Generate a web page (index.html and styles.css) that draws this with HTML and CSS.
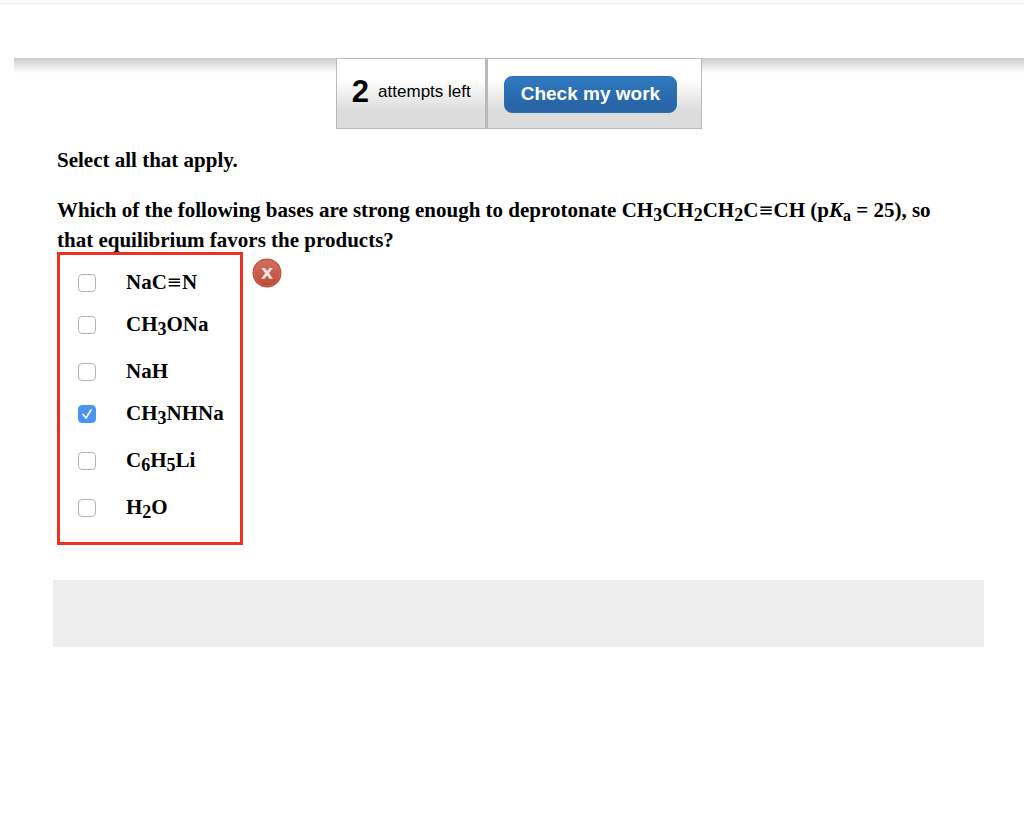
FILE: index.html
```html
<!DOCTYPE html>
<html lang="en">
<head>
    <meta charset="UTF-8">
    <title>Question</title>
    <link rel="stylesheet" href="styles.css">
</head>
<body>
    <div class="top-strip"></div>

    <header class="toolbar">
        <div class="toolbar-box">
            <div class="attempts"><strong>2</strong> <span>attempts left</span></div>
            <div class="check"><button type="button" id="checkBtn">Check my work</button></div>
        </div>
    </header>

    <main>
        <p class="prompt">Select all that apply.</p>
        <p class="prompt question">Which of the following bases are strong enough to deprotonate CH<sub>3</sub>CH<sub>2</sub>CH<sub>2</sub>C<span class="bond">≡</span>CH (p<i>K</i><sub class="small">a</sub> = 25), so that equilibrium favors the products?</p>

        <div class="answer">
            <ul class="choices">
                <li><input type="checkbox" id="nacn"><label for="nacn">NaC<span class="bond">≡</span>N</label></li>
                <li class="tall"><input type="checkbox" id="ch3ona"><label for="ch3ona">CH<sub>3</sub>ONa</label></li>
                <li><input type="checkbox" id="nah"><label for="nah">NaH</label></li>
                <li class="tall"><input type="checkbox" id="ch3nhna" checked><label for="ch3nhna">CH<sub>3</sub>NHNa</label></li>
                <li class="tall"><input type="checkbox" id="c6h5li"><label for="c6h5li">C<sub>6</sub>H<sub>5</sub>Li</label></li>
                <li class="tall"><input type="checkbox" id="h2o"><label for="h2o">H<sub>2</sub>O</label></li>
            </ul>
            <svg class="wrong" viewBox="0 0 30 30" role="img" aria-label="Incorrect">
                <defs>
                    <linearGradient id="red" x1="0" y1="0" x2="0" y2="1">
                        <stop offset="0" stop-color="#d2705f"/>
                        <stop offset="1" stop-color="#bd4937"/>
                    </linearGradient>
                </defs>
                <circle cx="15" cy="15" r="14.5" fill="#b9503f"/>
                <circle cx="15" cy="15" r="13" fill="url(#red)" stroke="#d07565" stroke-width="0.6"/>
                <path d="M9.4 10h3.6l2.2 3.1 2.2-3.1h3.4l-3.8 5.2 4 5.6h-3.6l-2.4-3.4-2.4 3.4H9.1l4.1-5.6z" fill="#f7e6e2"/>
            </svg>
        </div>

        <div class="footer-bar"></div>
    </main>
</body>
</html>
```

FILE: styles.css
```css
body {
    margin: 0;
    background-color: white;
    color: black;
    font-family: "Liberation Serif", "Times New Roman", serif;
}
.top-strip {
    height: 3px;
    background-color: #fafafa;
    border-bottom: 1px solid #ececec;
}
.toolbar {
    display: flex;
    justify-content: center;
    align-items: flex-start;
    margin: 54px 0 0 14px;
    background: linear-gradient(#cbcbcb, white) no-repeat 0 0 / 100% 15px;
}
.toolbar-box {
    display: flex;
    box-sizing: border-box;
    height: 71px;
    border: 1px solid #b9b9b9;
    background: linear-gradient(white 30%, #dcdcdc 75%);
    font-family: "Liberation Sans", Arial, sans-serif;
}
.attempts {
    display: flex;
    align-items: center;
    gap: 9px;
    padding: 0 14px 3px 15px;
    font-size: 17px;
}
.attempts strong {
    font-size: 31px;
}
.check {
    padding: 17px 24px 0 16px;
    border-left: 3px solid #b9b9b9;
}
button {
    display: block;
    height: 37px;
    padding: 0 16px 2px;
    border: 1px solid #2a6db0;
    border-radius: 8px;
    background: linear-gradient(#2f7ac2, #2866a8 75%);
    color: white;
    font-family: "Liberation Sans", Arial, sans-serif;
    font-size: 19px;
    font-weight: bold;
    cursor: pointer;
}
main {
    padding: 16px 40px 24px 53px;
}
.prompt {
    margin: 0 24px 20px 4px;
    font-size: 21px;
    font-weight: bold;
    line-height: 30px;
}
.prompt.question {
    margin-bottom: 0;
}
sub {
    font-size: 18px;
    line-height: 0;
    vertical-align: -4px;
}
sub.small {
    font-size: 16px;
}
.bond {
    font-family: "DejaVu Sans", sans-serif;
    font-size: 18px;
    font-weight: normal;
    line-height: 0;
    vertical-align: 1px;
}
.answer {
    display: flex;
    align-items: flex-start;
    gap: 9px;
    margin: -3px 0 35px 4px;
}
.choices {
    margin: 0;
    padding: 15px 16px 0 18px;
    border: 3px solid #ee3024;
    list-style: none;
    font-size: 21px;
    font-weight: bold;
    line-height: 24px;
}
.choices li {
    display: flex;
    align-items: flex-start;
    height: 42px;
}
.choices li.tall {
    height: 47px;
}
input[type="checkbox"] {
    appearance: none;
    box-sizing: border-box;
    width: 18px;
    height: 18px;
    margin: 4px 30px 0 0;
    border: 1px solid #b4b4b4;
    border-radius: 4px;
    background-color: white;
}
input[type="checkbox"]:checked {
    border-color: #4a94f4;
    background: #4a94f4 url("data:image/svg+xml,%3Csvg xmlns='http://www.w3.org/2000/svg' viewBox='0 0 16 16'%3E%3Cpath d='M4 8.5l3 3.5 5-8' fill='none' stroke='white' stroke-width='1.7' stroke-linecap='round' stroke-linejoin='round'/%3E%3C/svg%3E") center / 16px no-repeat;
}
.wrong {
    width: 30px;
    height: 30px;
    margin-top: 6px;
}
.footer-bar {
    height: 67px;
    background-color: #ededed;
}
```
